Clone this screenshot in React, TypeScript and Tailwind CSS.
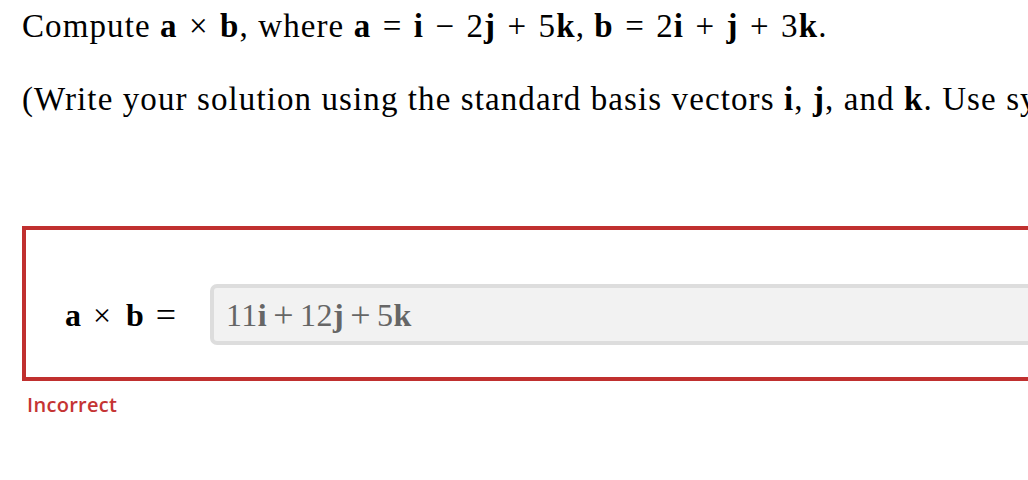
import React from "react";

const B = ({ children }: { children: React.ReactNode }) => <b className="font-bold">{children}</b>;
const Op = ({ children }: { children: React.ReactNode }) => <span className="mx-[2px]">{children}</span>;

export default function App() {
  return (
    <div className="w-[1028px] h-[480px] overflow-hidden bg-white text-black font-['Liberation_Serif','Times_New_Roman',serif]">
      <div className="pl-[22px] pt-[6px]">
        <p className="text-[33px] tracking-[1.1px] leading-[40px] whitespace-nowrap">
          Compute <B>a</B> <Op>×</Op> <B>b</B>, where <B>a</B> <Op>=</Op> <B>i</B> <Op>−</Op> 2<B>j</B> <Op>+</Op> 5<B>k</B>, <B>b</B> <Op>=</Op> 2<B>i</B> <Op>+</Op> <B>j</B> <Op>+</Op> 3<B>k</B>.
        </p>
        <p className="mt-[33px] text-[33px] tracking-[1.1px] leading-[40px] whitespace-nowrap">
          (Write your solution using the standard basis vectors <B>i</B>, <B>j</B>, and <B>k</B>. Use symbolic notation and fractions where needed.)
        </p>
        <div className="mt-[107px] w-[1100px] h-[155px] border-4 border-[#c0302f] pl-[39px] pt-[54px]">
          <div className="flex items-center">
            <div className="w-[145px] text-[32px] font-bold flex items-center leading-none">
              <span>a</span>
              <span className="font-normal ml-[12px]">×</span>
              <span className="ml-[15px]">b</span>
              <span className="ml-[12px] text-[36px] font-normal">=</span>
            </div>
            <div className="h-[61px] flex-1 rounded-[7px] border-4 border-[#dddddd] bg-[#f2f2f2] pl-[12px] flex items-center text-[32px] tracking-[0.5px] text-[#666666] whitespace-nowrap">
              11<b>i</b><span className="mx-[6px] text-[36px] leading-none">+</span>12<b>j</b><span className="mx-[6px] text-[36px] leading-none">+</span>5<b>k</b>
            </div>
          </div>
        </div>
        <div className="mt-[12px] pl-[5px] font-['Open_Sans',sans-serif] font-semibold text-[20px] tracking-[0.3px] text-[#c53434] leading-[24px]">
          Incorrect
        </div>
      </div>
    </div>
  );
}
